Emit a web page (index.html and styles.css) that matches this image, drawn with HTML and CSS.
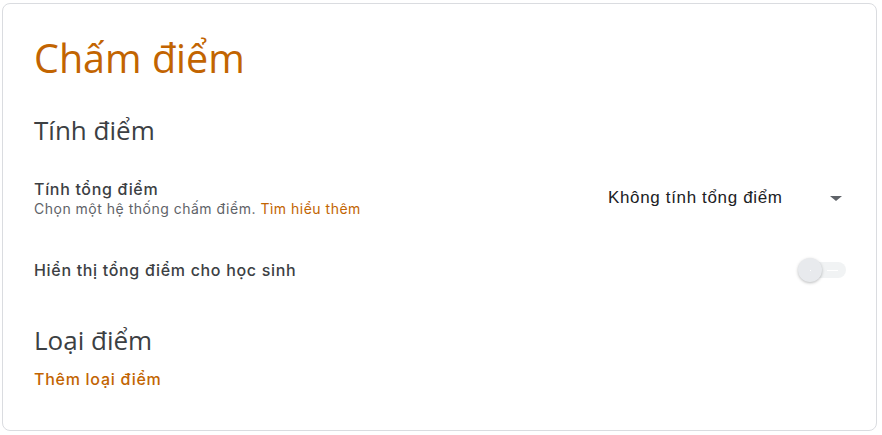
FILE: index.html
```html
<!DOCTYPE html>
<html lang="vi">
<head>
  <meta charset="UTF-8">
  <meta name="viewport" content="width=device-width, initial-scale=1.0">
  <title>Chấm điểm</title>
  <link rel="stylesheet" href="styles.css">
</head>
<body>
  <div class="card">
    <h1 class="title">Chấm điểm</h1>

    <!-- Tính điểm -->
    <div class="section">
      <h2 class="section-title">Tính điểm</h2>

      <div class="row row-total">
        <div class="label">
          <div class="label-main">Tính tổng điểm</div>
          <div class="label-hint">Chọn một hệ thống chấm điểm. <a href="#" class="link">Tìm hiểu thêm</a></div>
        </div>
        <div class="select">
          <span class="select-value">Không tính tổng điểm</span>
          <span class="select-arrow"></span>
        </div>
      </div>

      <div class="row row-toggle">
        <div class="label-main">Hiển thị tổng điểm cho học sinh</div>
        <div class="switch">
          <span class="switch-track"><span class="switch-dash"></span></span>
          <span class="switch-thumb"><span class="switch-dot"></span></span>
        </div>
      </div>
    </div>

    <!-- Loại điểm -->
    <div class="section section-types">
      <h2 class="section-title">Loại điểm</h2>
      <div class="add"><a href="#" class="add-link">Thêm loại điểm</a></div>
    </div>
  </div>
</body>
</html>
```

FILE: styles.css
```css
body {
  margin: 0;
  padding: 3px 5px 0 2px;
  background-color: #fff;
  font-family: Inter, Roboto, sans-serif;
  color: #3c4043;
}
.card {
  height: 428px;
  box-sizing: border-box;
  border: 1px solid #dadce0;
  border-radius: 8px;
  padding: 28px 30px 0 31px;
}
.title {
  margin: 0;
  font-family: "Open Sans", sans-serif;
  font-size: 39.5px;
  font-weight: 400;
  line-height: 52px;
  color: #c26401;
}
.section-title {
  margin: 0;
  font-family: "Open Sans", sans-serif;
  font-size: 26px;
  font-weight: 400;
  line-height: 32px;
  color: #3c4043;
}
.section {
  margin-top: 30px;
}
.section-types {
  margin-top: 42px;
}
.row {
  display: flex;
  align-items: center;
  justify-content: space-between;
}
.row-total {
  margin-top: 32px;
}
.row-toggle {
  margin-top: 40px;
}
.label-main {
  font-size: 16px;
  font-weight: 500;
  line-height: 22px;
  letter-spacing: 0.68px;
  color: #3c4043;
}
.label-hint {
  font-size: 14px;
  line-height: 18px;
  letter-spacing: 0.5px;
  color: #5f6368;
}
.link,
.add-link {
  color: #c26401;
  text-decoration: none;
}
.select {
  display: flex;
  align-items: center;
  justify-content: space-between;
  width: 234px;
  padding-right: 4px;
}
.select-value {
  font-family: "Liberation Sans", Arial, sans-serif;
  font-size: 17px;
  letter-spacing: 0.65px;
  color: #202124;
}
.select-arrow {
  width: 0;
  height: 0;
  border-left: 6px solid transparent;
  border-right: 6px solid transparent;
  border-top: 5px solid #5f6368;
}
.switch {
  position: relative;
  width: 48px;
  height: 24px;
}
.switch-track {
  position: absolute;
  right: 0;
  top: 4px;
  width: 40px;
  height: 16px;
  border-radius: 8px;
  background-color: #f1f3f4;
}
.switch-dash {
  position: absolute;
  right: 8px;
  top: 7.5px;
  width: 11px;
  height: 1px;
  background-color: #fff;
}
.switch-thumb {
  position: absolute;
  left: 0;
  top: 0;
  width: 24px;
  height: 24px;
  border-radius: 50%;
  background-color: #e8eaed;
  box-shadow: 0 1px 3px rgba(60, 64, 67, 0.35);
}
.switch-dot {
  position: absolute;
  left: 11.5px;
  top: 11.5px;
  width: 1px;
  height: 1px;
  background-color: #fff;
}
.add {
  margin-top: 12px;
  line-height: 22px;
}
.add-link {
  font-size: 16px;
  font-weight: 500;
  letter-spacing: 0.73px;
}
```
